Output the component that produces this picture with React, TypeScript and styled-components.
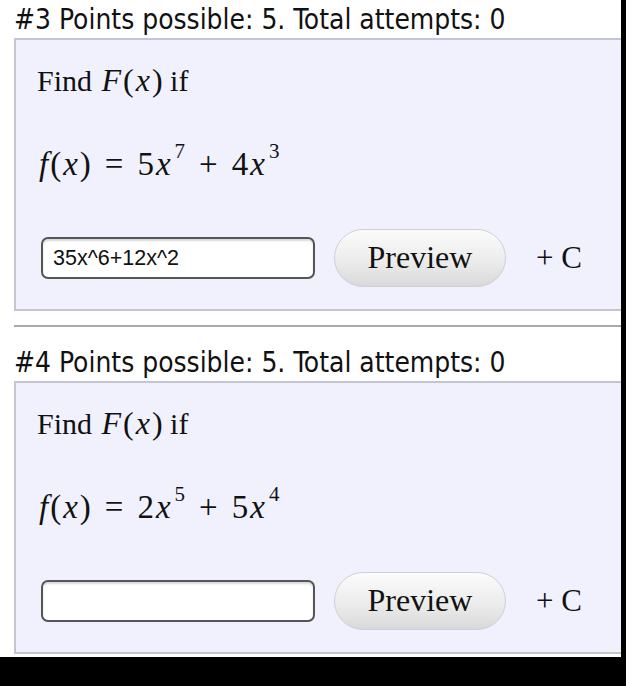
import React from 'react';
import styled, { createGlobalStyle } from 'styled-components';

const GlobalStyle = createGlobalStyle`
  html, body {
    margin: 0;
    padding: 0;
    background: #000;
  }
`;

const Page = styled.div`
  width: 621px;
  height: 657px;
  background: #fff;
  overflow: hidden;
  padding-left: 14px;
  box-sizing: border-box;
`;

const Question = styled.section`
  display: flex;
  flex-direction: column;
`;

const Header = styled.h3`
  margin: 0;
  height: 38px;
  font-family: 'DejaVu Sans Condensed', 'DejaVu Sans', sans-serif;
  font-weight: normal;
  font-size: 27.9px;
  line-height: 40px;
  color: #111;
  white-space: nowrap;
`;

const Box = styled.div`
  width: 640px;
  height: 273px;
  box-sizing: border-box;
  background: #f1f1fd;
  border: 2px solid #c4c4d4;
  padding-left: 21px;
  display: flex;
  flex-direction: column;
`;

const Prompt = styled.p`
  margin: 22px 0 0;
  font-family: 'Liberation Serif', 'Times New Roman', serif;
  font-size: 30px;
  line-height: 36px;
  color: #111;
  white-space: nowrap;
`;

const Formula = styled.span`
  font-family: 'Liberation Serif', 'Times New Roman', serif;
  font-size: 32px;
`;

const MathLine = styled.p`
  margin: 47px 0 0;
  font-family: 'Liberation Serif', 'Times New Roman', serif;
  font-size: 33px;
  line-height: 36px;
  color: #111;
  white-space: nowrap;
`;

const Var = styled.i`
  font-style: italic;
  padding: 0 2px;
`;

const Op = styled.span`
  margin: 0 14px;
`;

const Sup = styled.sup`
  font-size: 21px;
  vertical-align: 17px;
  line-height: 0;
  margin-left: 2px;
`;

const AnswerRow = styled.div`
  display: flex;
  align-items: center;
  margin-top: 47px;
`;

const AnswerInput = styled.input`
  width: 274px;
  height: 42px;
  box-sizing: border-box;
  margin: 0 0 0 4px;
  padding: 0 10px;
  border: 2px solid #555;
  border-radius: 7px;
  background: #fff;
  box-shadow: inset 0 2px 2px rgba(0, 0, 0, 0.15);
  font-family: 'Liberation Sans', Arial, sans-serif;
  font-size: 21.5px;
  color: #111;
  outline: none;
`;

const PreviewButton = styled.button`
  width: 172px;
  height: 58px;
  margin-left: 19px;
  border: 1px solid #cfcfd6;
  border-radius: 29px;
  background: linear-gradient(to bottom, #fbfbfb 0%, #ececec 55%, #d9d9d9 100%);
  font-family: 'Liberation Serif', 'Times New Roman', serif;
  font-size: 32px;
  color: #111;
  padding: 0 0 2px;
`;

const Constant = styled.span`
  margin-left: 30px;
  font-family: 'Liberation Serif', 'Times New Roman', serif;
  font-size: 31px;
  color: #111;
`;

const Rule = styled.hr`
  width: 640px;
  margin: 14px 0 0;
  border: 0;
  border-top: 2px solid #a9a9a9;
  height: 0;
`;

const Spacer = styled.div`
  height: 16px;
`;

type Term = { coef: number; exp: number };

const questions: { num: number; terms: Term[]; answer: string }[] = [
  { num: 3, terms: [{ coef: 5, exp: 7 }, { coef: 4, exp: 3 }], answer: '35x^6+12x^2' },
  { num: 4, terms: [{ coef: 2, exp: 5 }, { coef: 5, exp: 4 }], answer: '' },
];

const QuestionBlock: React.FC<{ num: number; terms: Term[]; answer: string }> = ({ num, terms, answer }) => (
  <Question>
    <Header>#{num} Points possible: 5. Total attempts: 0</Header>
    <Box>
      <Prompt>
        Find{' '}
        <Formula>
          <Var>F</Var>(<Var>x</Var>)
        </Formula>{' '}
        if
      </Prompt>
      <MathLine>
        <Var>f</Var>(<Var>x</Var>)<Op>=</Op>
        {terms[0].coef}
        <Var>x</Var>
        <Sup>{terms[0].exp}</Sup>
        <Op>+</Op>
        {terms[1].coef}
        <Var>x</Var>
        <Sup>{terms[1].exp}</Sup>
      </MathLine>
      <AnswerRow>
        <AnswerInput defaultValue={answer} />
        <PreviewButton>Preview</PreviewButton>
        <Constant>+ C</Constant>
      </AnswerRow>
    </Box>
  </Question>
);

export default function App() {
  return (
    <>
      <GlobalStyle />
      <Page>
        <QuestionBlock {...questions[0]} />
        <Rule />
        <Spacer />
        <QuestionBlock {...questions[1]} />
      </Page>
    </>
  );
}
